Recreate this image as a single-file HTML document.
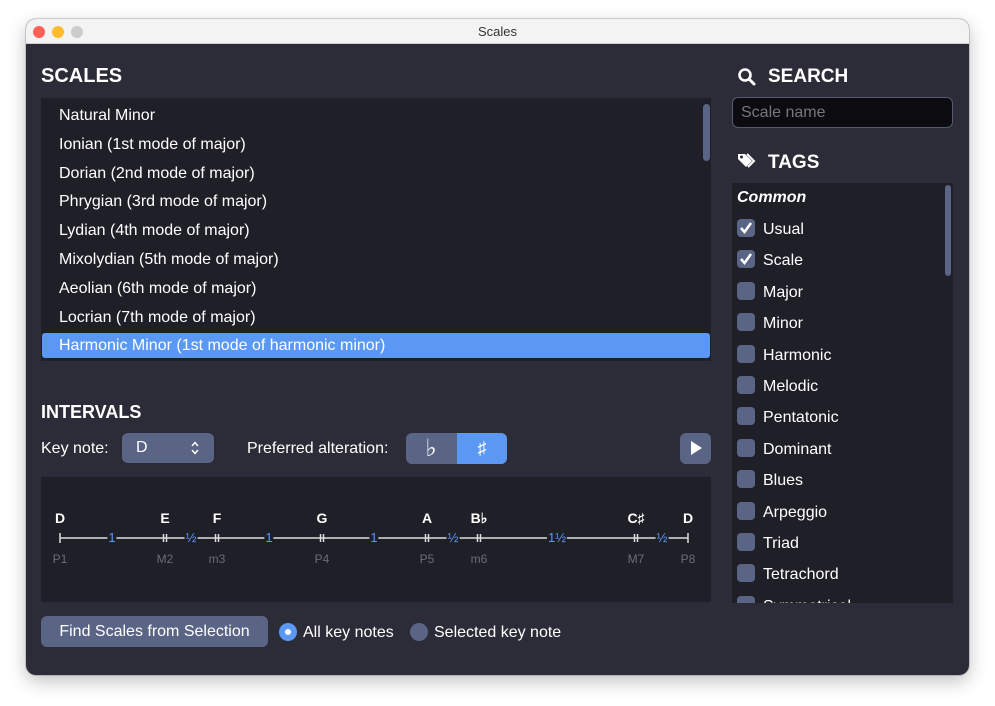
<!DOCTYPE html>
<html><head><style>
*{margin:0;padding:0;box-sizing:border-box}
body{width:995px;height:706px;background:#fff;font-family:"Liberation Sans",sans-serif;position:relative;overflow:hidden}
.win{position:absolute;left:26px;top:19px;width:943px;height:656px;border-radius:10px;background:#2c2c38;overflow:hidden;box-shadow:0 6px 18px rgba(0,0,0,.25),0 0 0 1px rgba(0,0,0,.15)}
.title{position:absolute;left:0;top:0;width:100%;height:25px;background:#f3f3f3;border-bottom:1px solid #d0d0d0;text-align:center;font-size:13px;line-height:25px;color:#333}
.dot{position:absolute;top:7px;width:12px;height:12px;border-radius:50%}
.a{position:absolute}
h2{position:absolute;color:#fff;font-size:20px;font-weight:bold}
.list{position:absolute;left:15px;top:79px;width:670px;height:263px;background:#1f1f28}
.row{position:absolute;left:0;width:668px;height:25px;line-height:25px;padding-left:18px;color:#fff;font-size:16px}
.sel{background:#5a98f4;border-radius:3px;left:1px;padding-left:17px}
.tags{position:absolute;left:706px;top:164px;width:221px;height:420px;background:#1f1f28;overflow:hidden}
.tag{position:absolute;left:5px;height:20px;color:#fff;font-size:16px;line-height:20px}
.cb{position:absolute;left:0;top:0;width:18px;height:18px;border-radius:4px;background:#5a6484}
.tag span{position:absolute;left:26px;top:1px;white-space:nowrap}
.note{position:absolute;top:491px;color:#fff;font-weight:bold;font-size:14px;transform:translateX(-50%)}
.lab{position:absolute;top:533px;color:#6c6c78;font-size:12px;transform:translateX(-50%)}
.iv{position:absolute;top:511px;color:#5a98f4;font-size:13px;transform:translateX(-50%);background:#1f1f28;padding:0 1px}
</style></head><body>
<div class="win">
<div class="title">Scales
<div class="dot" style="left:7px;background:#fe5f57"></div>
<div class="dot" style="left:26px;background:#febc2e"></div>
<div class="dot" style="left:45px;background:#ccc"></div>
</div>
<h2 style="left:15px;top:46px">SCALES</h2>
<div class="list">
<div class="row" style="top:5px">Natural Minor</div>
<div class="row" style="top:34px">Ionian (1st mode of major)</div>
<div class="row" style="top:63px">Dorian (2nd mode of major)</div>
<div class="row" style="top:91px">Phrygian (3rd mode of major)</div>
<div class="row" style="top:120px">Lydian (4th mode of major)</div>
<div class="row" style="top:149px">Mixolydian (5th mode of major)</div>
<div class="row" style="top:178px">Aeolian (6th mode of major)</div>
<div class="row" style="top:207px">Locrian (7th mode of major)</div>
<div class="row sel" style="top:235px">Harmonic Minor (1st mode of harmonic minor)</div>
<div class="a" style="left:662px;top:6px;width:7px;height:57px;border-radius:4px;background:#5a6484"></div>
</div>
<h2 style="left:15px;top:383px;font-size:18px">INTERVALS</h2>
<div class="a" style="left:15px;top:421px;color:#fff;font-size:16px">Key note:</div>
<div class="a" style="left:96px;top:414px;width:92px;height:30px;border-radius:6px;background:#5a6484;color:#fff;font-size:16px;line-height:30px;padding-left:14px">D<svg class="a" style="left:68px;top:7px" width="10" height="16"><path d="M2 6l3-3.5 3 3.5M2 10l3 3.5 3-3.5" stroke="#fff" stroke-width="1.4" fill="none"/></svg></div>
<div class="a" style="left:221px;top:421px;color:#fff;font-size:16px">Preferred alteration:</div>
<div class="a" style="left:380px;top:414px;width:101px;height:31px;border-radius:6px;background:#5a6484;overflow:hidden">
<div class="a" style="left:0;top:0;width:50px;height:31px;color:#fff;text-align:center;line-height:31px;font-size:24px">&#9837;</div>
<div class="a" style="left:51px;top:0;width:50px;height:31px;background:#5a98f4;color:#fff;text-align:center;line-height:31px;font-size:18px">&#9839;</div>
</div>
<div class="a" style="left:654px;top:414px;width:31px;height:31px;border-radius:6px;background:#5a6484"><div class="a" style="left:11px;top:8px;width:0;height:0;border-left:11px solid #fff;border-top:7.5px solid transparent;border-bottom:7.5px solid transparent"></div></div>
<div class="a" style="left:15px;top:458px;width:670px;height:125px;background:#1f1f28"></div>
<svg class="a" style="left:0;top:0" width="943" height="656">
<g stroke="#ddd" stroke-width="1.5" fill="none">
<line x1="34" y1="519" x2="662" y2="519"/>
<line x1="34" y1="514" x2="34" y2="524"/><line x1="662" y1="514" x2="662" y2="524"/>
<path d="M137.5 515v8M140.5 515v8M189.5 515v8M192.5 515v8M294.5 515v8M297.5 515v8M399.5 515v8M402.5 515v8M451.5 515v8M454.5 515v8M608.5 515v8M611.5 515v8"/>
</g></svg>
<div class="note" style="left:34px">D</div><div class="note" style="left:139px">E</div><div class="note" style="left:191px">F</div><div class="note" style="left:296px">G</div><div class="note" style="left:401px">A</div><div class="note" style="left:453px">B&#9837;</div><div class="note" style="left:610px">C&#9839;</div><div class="note" style="left:662px">D</div>
<div class="lab" style="left:34px">P1</div><div class="lab" style="left:139px">M2</div><div class="lab" style="left:191px">m3</div><div class="lab" style="left:296px">P4</div><div class="lab" style="left:401px">P5</div><div class="lab" style="left:453px">m6</div><div class="lab" style="left:610px">M7</div><div class="lab" style="left:662px">P8</div>
<div class="iv" style="left:86px">1</div><div class="iv" style="left:165px">½</div><div class="iv" style="left:243px">1</div><div class="iv" style="left:348px">1</div><div class="iv" style="left:427px">½</div><div class="iv" style="left:531px">1½</div><div class="iv" style="left:636px">½</div>
<div class="a" style="left:15px;top:597px;width:227px;height:31px;border-radius:6px;background:#5a6484;color:#fff;font-size:16px;line-height:32px;text-align:center">Find Scales from Selection</div>
<div class="a" style="left:253px;top:604px;width:18px;height:18px;border-radius:50%;background:#5a98f4"><div class="a" style="left:6px;top:6px;width:6px;height:6px;border-radius:50%;background:#fff"></div></div>
<div class="a" style="left:277px;top:605px;color:#fff;font-size:16px">All key notes</div>
<div class="a" style="left:384px;top:604px;width:18px;height:18px;border-radius:50%;background:#5a6484"></div>
<div class="a" style="left:408px;top:605px;color:#fff;font-size:16px">Selected key note</div>

<svg class="a" style="left:711px;top:48px" width="20" height="20"><circle cx="8" cy="8" r="5.5" stroke="#fff" stroke-width="2.6" fill="none"/><line x1="12" y1="12" x2="17" y2="17" stroke="#fff" stroke-width="3" stroke-linecap="round"/></svg>
<h2 style="left:742px;top:47px;font-size:19px">SEARCH</h2>
<div class="a" style="left:706px;top:78px;width:221px;height:31px;border-radius:6px;background:#0c0c10;border:1px solid #555a70;color:#777;font-size:16px;line-height:30px;padding-left:8px">Scale name</div>
<svg class="a" style="left:711px;top:133px" width="22" height="20"><path d="M1 2h7l7 7-6 6-8-8z" fill="#fff"/><circle cx="4.5" cy="5" r="1.5" fill="#2c2c38"/><path d="M10 2l7 7-6 6" stroke="#fff" stroke-width="2" fill="none"/></svg>
<h2 style="left:742px;top:133px;font-size:19px">TAGS</h2>
<div class="tags">
<div class="a" style="left:5px;top:6px;color:#fff;font-size:16px;font-weight:bold;font-style:italic">Common</div>
<div class="tag" style="top:36px"><div class="cb"></div><svg class="a" style="left:2px;top:2px" width="14" height="14"><path d="M2 7l3.5 4L12 2" stroke="#fff" stroke-width="2.5" fill="none"/></svg><span>Usual</span></div>
<div class="tag" style="top:67px"><div class="cb"></div><svg class="a" style="left:2px;top:2px" width="14" height="14"><path d="M2 7l3.5 4L12 2" stroke="#fff" stroke-width="2.5" fill="none"/></svg><span>Scale</span></div>
<div class="tag" style="top:99px"><div class="cb"></div><span>Major</span></div>
<div class="tag" style="top:130px"><div class="cb"></div><span>Minor</span></div>
<div class="tag" style="top:162px"><div class="cb"></div><span>Harmonic</span></div>
<div class="tag" style="top:193px"><div class="cb"></div><span>Melodic</span></div>
<div class="tag" style="top:224px"><div class="cb"></div><span>Pentatonic</span></div>
<div class="tag" style="top:256px"><div class="cb"></div><span>Dominant</span></div>
<div class="tag" style="top:287px"><div class="cb"></div><span>Blues</span></div>
<div class="tag" style="top:319px"><div class="cb"></div><span>Arpeggio</span></div>
<div class="tag" style="top:350px"><div class="cb"></div><span>Triad</span></div>
<div class="tag" style="top:381px"><div class="cb"></div><span>Tetrachord</span></div>
<div class="tag" style="top:413px"><div class="cb"></div><span>Symmetrical</span></div>
<div class="a" style="left:213px;top:2px;width:6px;height:91px;border-radius:3px;background:#5a6484"></div>
</div>
</div>
</body></html>
